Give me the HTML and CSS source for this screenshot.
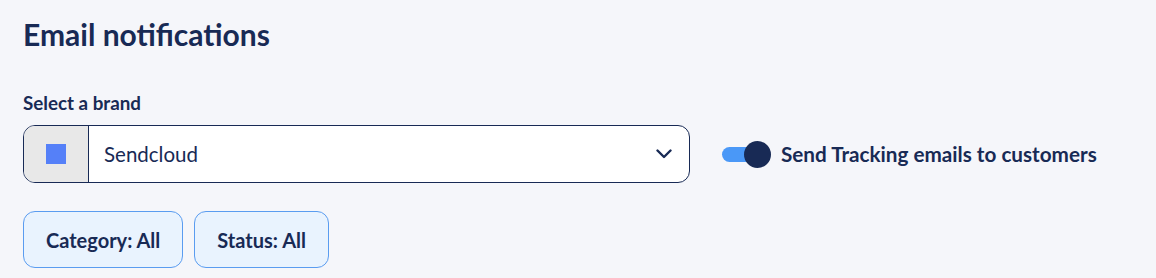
FILE: index.html
```html
<!DOCTYPE html>
<html>
<head>
<meta charset="utf-8">
<link rel="stylesheet" href="styles.css">
</head>
<body>
<div class="page">
  <h1 class="title">Email notifications</h1>
  <div class="label">Select a brand</div>
  <div class="row">
    <div class="select">
      <div class="select-icon"><span class="swatch"></span></div>
      <div class="select-value">Sendcloud</div>
      <svg class="chevron" width="16" height="10" viewBox="0 0 16 10"><path d="M1.5 1.5 L8 8 L14.5 1.5" fill="none" stroke="#182a55" stroke-width="2.4" stroke-linecap="round" stroke-linejoin="round"/></svg>
    </div>
    <div class="toggle-wrap">
      <div class="toggle"><span class="track"></span><span class="knob"></span></div>
      <span class="toggle-label">Send Tracking emails to customers</span>
    </div>
  </div>
  <div class="chips">
    <button class="chip">Category: All</button>
    <button class="chip">Status: All</button>
  </div>
</div>
</body>
</html>
```
FILE: styles.css
```css
html, body {
  margin: 0;
  padding: 0;
  background: #f5f6fa;
}
.page {
  padding: 16px 23px 0 23px;
  font-family: "Source Sans Pro", Lato, "Noto Sans", sans-serif;
  color: #182a55;
}
.title {
  margin: 0;
  font-size: 30px;
  font-weight: 700;
  line-height: 36px;
}
.label {
  margin-top: 40px;
  font-size: 18.8px;
  font-weight: 700;
  line-height: 22px;
}
.row {
  margin-top: 11px;
  display: flex;
  align-items: center;
  gap: 32px;
}
.select {
  width: 667px;
  height: 58px;
  box-sizing: border-box;
  border: 1px solid #182a55;
  border-radius: 12px;
  background: #fff;
  display: flex;
  align-items: center;
  overflow: hidden;
}
.select-icon {
  width: 64px;
  height: 100%;
  background: #e8e8e8;
  border-right: 1px solid #182a55;
  display: flex;
  align-items: center;
  justify-content: center;
}
.swatch {
  width: 20px;
  height: 20px;
  background: #5580f8;
}
.select-value {
  flex: 1;
  padding-left: 15px;
  font-size: 20.5px;
  font-weight: 400;
}
.chevron {
  margin-right: 17px;
}
.toggle-wrap {
  display: flex;
  align-items: center;
  gap: 10px;
}
.toggle {
  position: relative;
  width: 49px;
  height: 27px;
}
.track {
  position: absolute;
  left: 0;
  top: 6px;
  width: 40px;
  height: 15px;
  border-radius: 8px;
  background: #4a98f7;
}
.knob {
  position: absolute;
  right: 0;
  top: 0;
  width: 27px;
  height: 27px;
  border-radius: 50%;
  background: #182a55;
}
.toggle-label {
  font-size: 20.7px;
  font-weight: 700;
}
.chips {
  margin-top: 28px;
  display: flex;
  gap: 11px;
}
.chip {
  height: 57px;
  padding: 0 22px;
  border: 1px solid #5a9cf0;
  border-radius: 12px;
  background: #e9f3fe;
  font-family: inherit;
  color: #182a55;
  font-size: 20px;
  font-weight: 700;
}
```
